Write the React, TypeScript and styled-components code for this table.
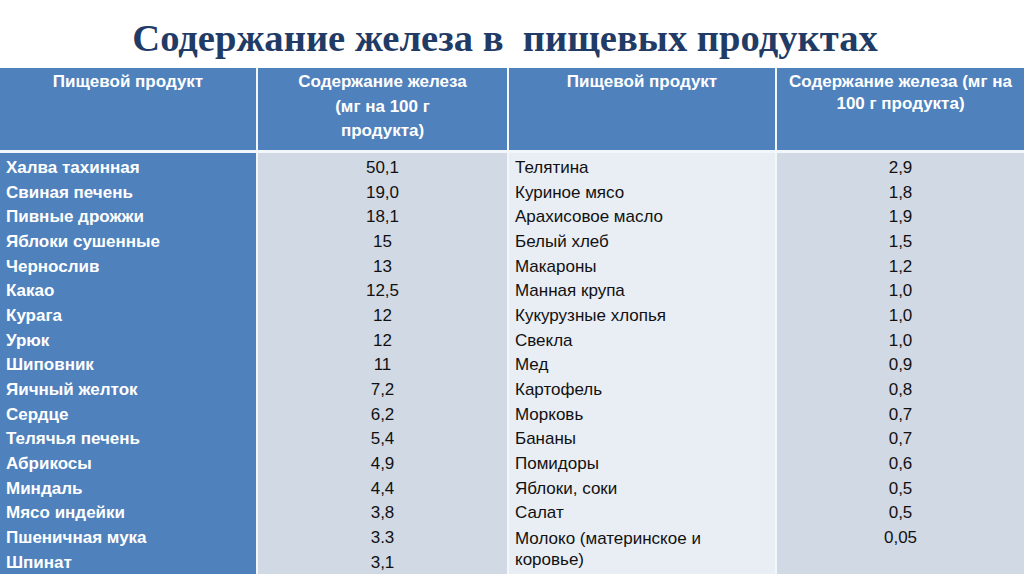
import React from "react";
import styled, { createGlobalStyle } from "styled-components";

const Global = createGlobalStyle`
  html, body { margin: 0; padding: 0; background: #ffffff; }
  body { width: 1024px; height: 574px; overflow: hidden; }
`;

const Page = styled.div`
  width: 1024px;
  height: 574px;
  display: flex;
  flex-direction: column;
  overflow: hidden;
  background: #ffffff;
`;

const Title = styled.h1`
  margin: 0;
  height: 68px;
  flex-shrink: 0;
  display: flex;
  align-items: center;
  justify-content: center;
  padding: 8px 14px 0 0;
  box-sizing: border-box;
  font-family: "Liberation Serif", "Times New Roman", serif;
  font-weight: bold;
  font-size: 38.6px;
  color: #1f3b66;
  white-space: pre;
`;

const Table = styled.div`
  display: grid;
  grid-template-columns: 256px 249px 266px 1fr;
  grid-template-rows: 82px 1fr;
  column-gap: 2px;
  row-gap: 3px;
  background: #f3f6fb;
  flex: 1;
  min-height: 0;
  overflow: hidden;
  font-family: "Liberation Sans", Arial, sans-serif;
`;

const HeadCell = styled.div<{ $tight?: boolean }>`
  background: #4f81bd;
  color: #ffffff;
  font-weight: bold;
  font-size: 17px;
  line-height: ${(p) => (p.$tight ? "22px" : "24.5px")};
  text-align: center;
  padding: ${(p) => (p.$tight ? "3px 4px 0" : "2px 8px 0")};
`;

const BodyCell = styled.div<{ $tone: "blue" | "mid" | "light"; $align: "left" | "center"; $bold?: boolean }>`
  background: ${(p) =>
    p.$tone === "blue" ? "#4f81bd" : p.$tone === "mid" ? "#d1d9e5" : "#e9edf4"};
  color: ${(p) => (p.$tone === "blue" ? "#ffffff" : "#111111")};
  font-weight: ${(p) => (p.$bold ? "bold" : "normal")};
  text-align: ${(p) => p.$align};
  font-size: 17px;
  padding: 3px ${(p) => (p.$align === "left" ? "6px" : "0")} 0;
  display: flex;
  flex-direction: column;
  overflow: hidden;
  min-height: 0;
`;

const Line = styled.div<{ $wrapped?: boolean }>`
  flex-shrink: 0;
  line-height: ${(p) => (p.$wrapped ? "21px" : "24.65px")};
  padding-top: ${(p) => (p.$wrapped ? "2px" : "0")};
`;

const left = [
  ["Халва тахинная", "50,1"],
  ["Свиная печень", "19,0"],
  ["Пивные дрожжи", "18,1"],
  ["Яблоки сушенные", "15"],
  ["Чернослив", "13"],
  ["Какао", "12,5"],
  ["Курага", "12"],
  ["Урюк", "12"],
  ["Шиповник", "11"],
  ["Яичный желток", "7,2"],
  ["Сердце", "6,2"],
  ["Телячья печень", "5,4"],
  ["Абрикосы", "4,9"],
  ["Миндаль", "4,4"],
  ["Мясо индейки", "3,8"],
  ["Пшеничная мука", "3.3"],
  ["Шпинат", "3,1"],
];

const right = [
  ["Телятина", "2,9"],
  ["Куриное мясо", "1,8"],
  ["Арахисовое масло", "1,9"],
  ["Белый хлеб", "1,5"],
  ["Макароны", "1,2"],
  ["Манная крупа", "1,0"],
  ["Кукурузные хлопья", "1,0"],
  ["Свекла", "1,0"],
  ["Мед", "0,9"],
  ["Картофель", "0,8"],
  ["Морковь", "0,7"],
  ["Бананы", "0,7"],
  ["Помидоры", "0,6"],
  ["Яблоки, соки", "0,5"],
  ["Салат", "0,5"],
];

export default function App() {
  return (
    <Page>
      <Global />
      <Title>{"Содержание железа в  пищевых продуктах"}</Title>
      <Table>
        <HeadCell>Пищевой продукт</HeadCell>
        <HeadCell>
          Содержание железа
          <br />
          (мг на 100 г
          <br />
          продукта)
        </HeadCell>
        <HeadCell>Пищевой продукт</HeadCell>
        <HeadCell $tight>
          Содержание железа (мг на
          <br />
          100 г продукта)
        </HeadCell>
        <BodyCell $tone="blue" $align="left" $bold>
          {left.map(([n]) => (
            <Line key={n}>{n}</Line>
          ))}
        </BodyCell>
        <BodyCell $tone="mid" $align="center">
          {left.map(([n, v]) => (
            <Line key={n}>{v}</Line>
          ))}
        </BodyCell>
        <BodyCell $tone="light" $align="left">
          {right.map(([n]) => (
            <Line key={n}>{n}</Line>
          ))}
          <Line $wrapped>
            Молоко (материнское и
            <br />
            коровье)
          </Line>
        </BodyCell>
        <BodyCell $tone="mid" $align="center">
          {right.map(([n, v]) => (
            <Line key={n}>{v}</Line>
          ))}
          <Line>0,05</Line>
        </BodyCell>
      </Table>
    </Page>
  );
}
